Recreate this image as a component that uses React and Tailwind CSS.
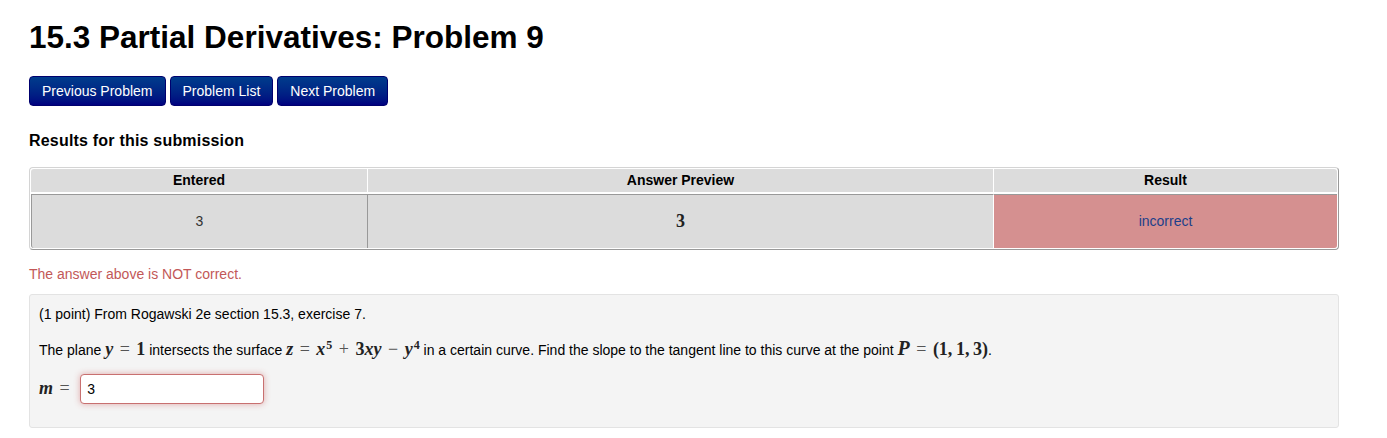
import React from 'react'

const M = ({ children, className = '' }) => (
    <span className={`font-['Liberation_Serif',serif] font-bold text-[18px] text-[#222] ${className}`}>{children}</span>
)
const V = ({ children }) => <i className="italic">{children}</i>
const Op = ({ children }) => <span className="font-normal text-[#555] mx-[6.5px]">{children}</span>
const Sup = ({ children }) => <sup className="text-[12px] ml-px">{children}</sup>

const NavButton = ({ children }) => (
    <button className="h-[30px] px-3 text-sm text-white rounded-[4px] border border-[#00006e] bg-gradient-to-b from-[#003c8c] to-[#00007f]">
        {children}
    </button>
)

export default function App() {
    return (
        <div className="bg-white h-[438px] overflow-hidden pl-[29px] pr-[48px] pt-[18px] font-['Liberation_Sans',Arial,sans-serif] text-sm text-black">
            <h1 className="text-[31.5px] leading-[38px] font-bold">15.3 Partial Derivatives: Problem 9</h1>

            <div className="flex gap-[4px] mt-[20px]">
                <NavButton>Previous Problem</NavButton>
                <NavButton>Problem List</NavButton>
                <NavButton>Next Problem</NavButton>
            </div>

            <h2 className="text-base leading-[20px] font-bold mt-[25px] tracking-[0.2px]">Results for this submission</h2>

            <table className="mt-[16px] w-[1310px] table-fixed border-separate border-spacing-0 rounded-[4px] border border-[#d4d4d4] border-r-[#999] border-b-[#999] p-px">
                <colgroup>
                    <col className="w-[337px]" />
                    <col className="w-[626px]" />
                    <col />
                </colgroup>
                <thead>
                    <tr className="h-[25px] bg-[#dcdcdc] text-sm">
                        <th className="pb-px rounded-tl-[3px] border-r border-white border-b-2 border-b-white">Entered</th>
                        <th className="pb-px border-r border-white border-b-2 border-b-white">Answer Preview</th>
                        <th className="pb-px rounded-tr-[3px] border-b-2 border-b-white">Result</th>
                    </tr>
                </thead>
                <tbody>
                    <tr className="h-[54px] bg-[#dcdcdc] text-center">
                        <td className="pb-px text-sm border-l border-l-[#999] border-t border-t-[#999] border-r border-r-[#999] rounded-bl-[3px] text-[#333]">3</td>
                        <td className="border-t border-t-[#999] border-r border-r-white"><M>3</M></td>
                        <td className="pb-px bg-[#d59090] border-t border-t-[#999] text-[#1d3f8a] rounded-br-[3px]">incorrect</td>
                    </tr>
                </tbody>
            </table>

            <p className="mt-[14px] leading-[20px] text-[#c25858]">The answer above is NOT correct.</p>

            <div className="mt-[10px] w-[1310px] h-[134px] bg-[#f4f4f4] border border-[#e3e3e3] rounded-[3px] px-[9px] pt-[9px]">
                <p className="leading-[20px]">(1 point) From Rogawski 2e section 15.3, exercise 7.</p>
                <p className="leading-[24px] mt-[12px]">
                    The plane{' '}
                    <M><V>y</V><Op>=</Op>1</M>
                    {' '}intersects the surface{' '}
                    <M><V>z</V><Op>=</Op><V>x</V><Sup>5</Sup><Op>+</Op>3<V>xy</V><Op>−</Op><V>y</V><Sup>4</Sup></M>
                    {' '}in a certain curve. Find the slope to the tangent line to this curve at the point{' '}
                    <M><span className="text-[20px]"><V>P</V></span><Op>=</Op>(1,&#8201;1,&#8201;3)</M>.
                </p>
                <div className="flex items-center mt-[12px]">
                    <M><V>m</V><Op>=</Op></M>
                    <input
                        readOnly
                        value="3"
                        className="ml-[4px] w-[184px] h-[30px] px-[6px] text-sm bg-white rounded-[4px] border border-[#c87070] shadow-[0_0_6px_rgba(200,80,80,0.45)] outline-none"
                    />
                </div>
            </div>
        </div>
    )
}
